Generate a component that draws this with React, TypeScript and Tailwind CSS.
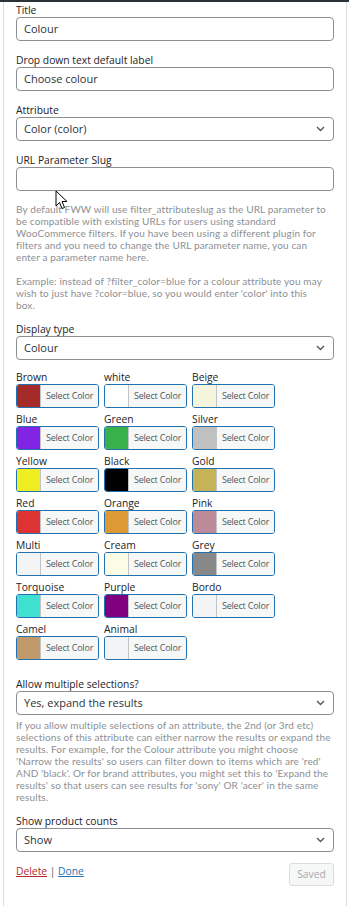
const swatches: { name: string; color: string }[] = [
  { name: 'Brown', color: '#a52a2a' },
  { name: 'white', color: '#ffffff' },
  { name: 'Beige', color: '#f5f5dc' },
  { name: 'Blue', color: '#8224e3' },
  { name: 'Green', color: '#38b14a' },
  { name: 'Silver', color: '#c0c0c0' },
  { name: 'Yellow', color: '#eeee22' },
  { name: 'Black', color: '#000000' },
  { name: 'Gold', color: '#c5b358' },
  { name: 'Red', color: '#dd3333' },
  { name: 'Orange', color: '#dd9933' },
  { name: 'Pink', color: '#bc8a98' },
  { name: 'Multi', color: '#f3f4f5' },
  { name: 'Cream', color: '#fcfce6' },
  { name: 'Grey', color: '#888888' },
  { name: 'Torquoise', color: '#40e0d0' },
  { name: 'Purple', color: '#800080' },
  { name: 'Bordo', color: '#f3f4f5' },
  { name: 'Camel', color: '#c19a6b' },
  { name: 'Animal', color: '#f3f4f5' },
]

// help text keeps the same line breaks as the settings panel
const slugHelp = [
  'By default FWW will use filter_attributeslug as the URL parameter to',
  'be compatible with existing URLs for users using standard',
  'WooCommerce filters. If you have been using a different plugin for',
  'filters and you need to change the URL parameter name, you can',
  'enter a parameter name here.',
]
const slugExample = [
  'Example: instead of ?filter_color=blue for a colour attribute you may',
  "wish to just have ?color=blue, so you would enter 'color' into this",
  'box.',
]
const multiHelp = [
  'If you allow multiple selections of an attribute, the 2nd (or 3rd etc)',
  'selections of this attribute can either narrow the results or expand the',
  'results. For example, for the Colour attribute you might choose',
  "'Narrow the results' so users can filter down to items which are 'red'",
  "AND 'black'. Or for brand attributes, you might set this to 'Expand the",
  "results' so that users can see results for 'sony' OR 'acer' in the same",
  'results.',
]

function Help({ lines, className = '' }: { lines: string[]; className?: string }) {
  return (
    <p className={`font-['Lato',sans-serif] text-[10px] leading-[12px] tracking-[0.13px] text-[#8c8f94] ${className}`}>
      {lines.map((l) => (
        <span key={l} className="block whitespace-nowrap">
          {l}
        </span>
      ))}
    </p>
  )
}

function Label({ children }: { children: React.ReactNode }) {
  return <label className="block text-[10.3px] leading-[14px] text-[#1d2327]">{children}</label>
}

function TextInput({ value }: { value?: string }) {
  return (
    <div className="flex h-[24px] items-center rounded-[4px] border border-[#8c8f94] px-[7px] text-[11px] text-[#2c3338]">
      {value}
    </div>
  )
}

function Chevron() {
  return (
    <svg width="9" height="6" viewBox="0 0 9 6" className="mr-[1px]">
      <path d="M1 1 L4.5 4.5 L8 1" fill="none" stroke="#50575e" strokeWidth="1.4" />
    </svg>
  )
}

function Select({ value }: { value: string }) {
  return (
    <div className="flex h-[24px] items-center justify-between rounded-[4px] border border-[#8c8f94] pl-[7px] pr-[7px] text-[11px] text-[#2c3338]">
      <span>{value}</span>
      <Chevron />
    </div>
  )
}

function Swatch({ name, color }: { name: string; color: string }) {
  return (
    <div className="w-[83px]">
      <div className="text-[10.3px] leading-[14px] text-[#1d2327]">{name}</div>
      <div className="flex h-[24px] overflow-hidden rounded-[3px] border border-[#2271b1]">
        <div className="w-[24px] border-r border-[#c3c4c7]" style={{ backgroundColor: color }} />
        <div className="flex flex-1 items-center justify-center bg-[#f6f7f7] text-[9px] tracking-[-0.2px] text-[#50575e]">
          Select Color
        </div>
      </div>
    </div>
  )
}

function Cursor() {
  return (
    <svg className="absolute left-[55px] top-[188px]" width="13" height="20" viewBox="0 0 13 20">
      <path
        d="M1 1 L1 16 L4.5 12.5 L7 18.5 L9.5 17.5 L7 11.5 L12 11.5 Z"
        fill="#ffffff"
        stroke="#000000"
        strokeWidth="1"
        strokeLinejoin="round"
      />
    </svg>
  )
}

export default function App() {
  return (
    <div className="relative min-h-[906px] w-[349px] border-t-2 border-[#2c3338] bg-white font-['Open_Sans',sans-serif]">
      <div className="ml-[3px] mr-[2px] min-h-[904px] border-x border-[#dcdcde] px-[12px] pt-px">
        <div className="mb-[12px]">
          <Label>Title</Label>
          <TextInput value="Colour" />
        </div>
        <div className="mb-[12px]">
          <Label>Drop down text default label</Label>
          <TextInput value="Choose colour" />
        </div>
        <div className="mb-[12px]">
          <Label>Attribute</Label>
          <Select value="Color (color)" />
        </div>
        <div className="mb-[11px]">
          <Label>URL Parameter Slug</Label>
          <TextInput />
          <Help lines={slugHelp} className="mt-[12px]" />
          <Help lines={slugExample} className="mt-[12px]" />
        </div>
        <div className="mb-[10px]">
          <Label>Display type</Label>
          <Select value="Colour" />
        </div>
        <div className="grid w-[259px] grid-cols-3 gap-x-[5px] gap-y-[4px]">
          {swatches.map((s) => (
            <Swatch key={s.name} name={s.name} color={s.color} />
          ))}
        </div>
        <div className="mt-[17px] mb-[11px]">
          <Label>Allow multiple selections?</Label>
          <Select value="Yes, expand the results" />
          <Help lines={multiHelp} className="mt-[4px]" />
        </div>
        <div>
          <Label>Show product counts</Label>
          <Select value="Show" />
        </div>
        <div className="mt-[11px] flex items-start justify-between">
          <div className="mt-px text-[10.3px] leading-[14px]">
            <a className="text-[#b32d2e] underline">Delete</a>
            <span className="text-[#50575e]"> | </span>
            <a className="text-[#2271b1] underline">Done</a>
          </div>
          <button className="h-[23px] w-[45px] rounded-[3px] border border-[#dcdcde] bg-[#f6f7f7] text-[10.3px] text-[#a7aaad]">
            Saved
          </button>
        </div>
      </div>
      <Cursor />
    </div>
  )
}
